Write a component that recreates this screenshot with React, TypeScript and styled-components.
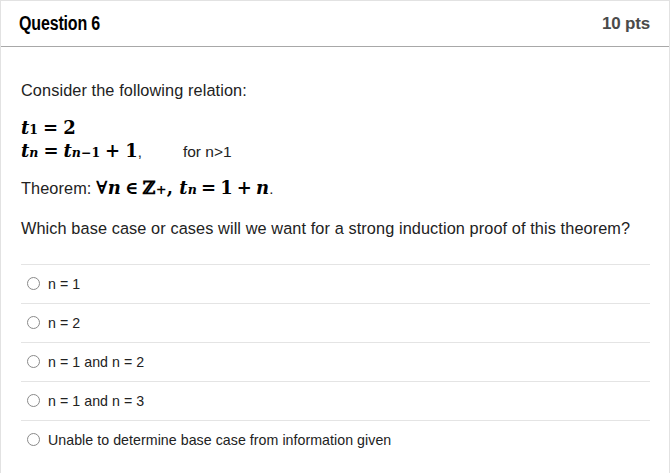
import React from "react";
import styled, { createGlobalStyle } from "styled-components";

const Global = createGlobalStyle`
  html, body { margin: 0; padding: 0; background: #ffffff; }
  * { box-sizing: border-box; }
`;

const Card = styled.div`
  width: 670px;
  height: 473px;
  border-top: 1px solid #e2e2e2;
  border-left: 1px solid #e2e2e2;
  border-right: 1px solid #e2e2e2;
  background: #fff;
  font-family: "Liberation Sans", Arial, sans-serif;
  color: #2d2d2d;
  overflow: hidden;
`;

const Header = styled.div`
  height: 46px;
  border-bottom: 1px solid #a8a8a8;
  display: flex;
  align-items: center;
  justify-content: space-between;
  padding: 0 19px 0 18px;
`;

const Title = styled.div`
  font-size: 20px;
  font-weight: bold;
  color: #000;
  letter-spacing: -0.2px;
  transform: scaleX(0.8);
  transform-origin: left center;
`;

const Points = styled.div`
  font-size: 17px;
  font-weight: bold;
  color: #4a4a4a;
  letter-spacing: -0.2px;
`;

const Body = styled.div`
  padding: 0 19px 0 20px;
`;

const Para = styled.div<{ $top: number }>`
  margin-top: ${(p) => p.$top}px;
  font-size: 16.3px;
  line-height: 18px;
  letter-spacing: 0.1px;
  color: #222;
`;

const MathBlock = styled.div`
  margin-top: 18px;
  display: flex;
  flex-direction: column;
`;

const MathLine = styled.div`
  height: 23px;
  display: flex;
  align-items: baseline;
`;

const M = styled.span`
  font-family: "DejaVu Serif", "Liberation Serif", serif;
  font-weight: bold;
  font-size: 18px;
  color: #000;
`;

const V = styled.span`
  font-family: "DejaVu Serif", "Liberation Serif", serif;
  font-weight: bold;
  font-style: italic;
  font-size: 18px;
  color: #000;
`;

const Sub = styled.sub`
  font-family: "DejaVu Serif", "Liberation Serif", serif;
  font-weight: bold;
  font-size: 12.5px;
  vertical-align: -4px;
  line-height: 0;
  color: #000;
`;

const Sup = styled.sup`
  font-family: "DejaVu Serif", "Liberation Serif", serif;
  font-weight: bold;
  font-size: 13px;
  vertical-align: 7px;
  line-height: 0;
  color: #000;
`;

const Op = styled.span<{ $gap?: number }>`
  font-family: "DejaVu Serif", "Liberation Serif", serif;
  font-weight: bold;
  font-size: 18px;
  margin: 0 ${(p) => p.$gap ?? 5}px;
  color: #000;
`;

const Note = styled.span`
  font-family: "Liberation Sans", Arial, sans-serif;
  font-size: 15.5px;
  margin-left: 41px;
  color: #222;
`;

const Comma = styled.span`
  font-family: "Liberation Sans", Arial, sans-serif;
  font-size: 15px;
  color: #222;
`;

const TheoremLine = styled.div`
  margin-top: 14px;
  display: flex;
  align-items: baseline;
  font-size: 16.3px;
  letter-spacing: 0.1px;
  color: #222;
`;

const Options = styled.div`
  margin-top: 27px;
`;

const Option = styled.label`
  display: flex;
  align-items: center;
  height: 39px;
  border-top: 1px solid #e4e4e4;
  padding: 0 0 1px 6px;
  font-size: 14.2px;
  letter-spacing: 0.05px;
  color: #222;
  gap: 8px;
`;

const Radio = styled.span`
  width: 13px;
  height: 13px;
  border-radius: 50%;
  border: 1px solid #8a8a8a;
  background: #fff;
  flex: none;
`;

const options = [
  "n = 1",
  "n = 2",
  "n = 1 and n = 2",
  "n = 1 and n = 3",
  "Unable to determine base case from information given",
];

export default function App() {
  return (
    <>
      <Global />
      <Card>
        <Header>
          <Title>Question 6</Title>
          <Points>10 pts</Points>
        </Header>
        <Body>
          <Para $top={34}>Consider the following relation:</Para>
          <MathBlock>
            <MathLine>
              <V>t</V>
              <Sub>1</Sub>
              <Op>=</Op>
              <M>2</M>
            </MathLine>
            <MathLine>
              <V>t</V>
              <Sub>
                <i>n</i>
              </Sub>
              <Op>=</Op>
              <V>t</V>
              <Sub>
                <i>n</i>−1
              </Sub>
              <Op>+</Op>
              <M>1</M>
              <Comma>,</Comma>
              <Note>for n&gt;1</Note>
            </MathLine>
          </MathBlock>
          <TheoremLine>
            Theorem:&nbsp;<M>∀</M>
            <V>n</V>
            <Op $gap={4}>∈</Op>
            <M>ℤ</M>
            <Sup>+</Sup>
            <M>,&nbsp;</M>
            <V>t</V>
            <Sub>
              <i>n</i>
            </Sub>
            <Op $gap={4}>=</Op>
            <M>1</M>
            <Op $gap={4}>+</Op>
            <V>n</V>
            <Comma>.</Comma>
          </TheoremLine>
          <Para $top={21}>
            Which base case or cases will we want for a strong induction proof of this theorem?
          </Para>
          <Options>
            {options.map((o) => (
              <Option key={o}>
                <Radio />
                {o}
              </Option>
            ))}
          </Options>
        </Body>
      </Card>
    </>
  );
}
